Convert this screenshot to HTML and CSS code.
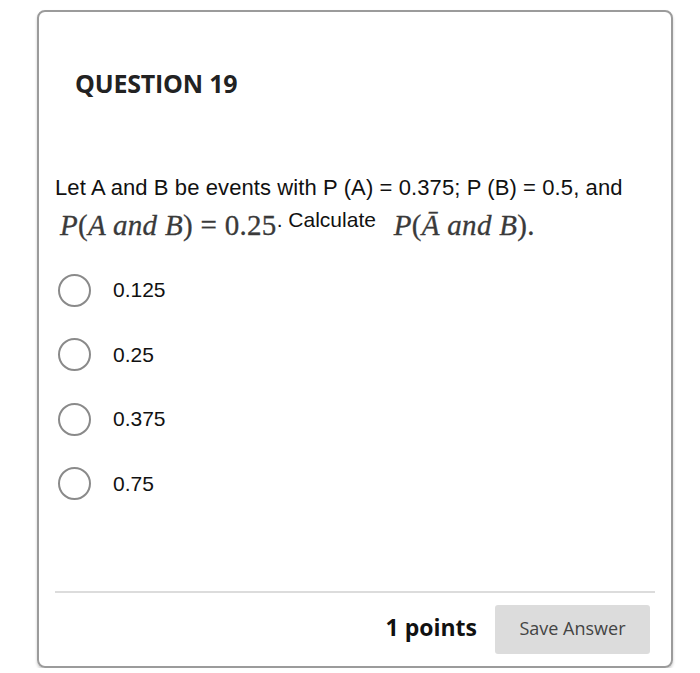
FILE: index.html
```html
<!DOCTYPE html>
<html>
<head>
<meta charset="utf-8">
<link rel="stylesheet" href="styles.css">
</head>
<body>
<div class="card">
  <h2 class="title">QUESTION 19</h2>
  <div class="question">
    <div class="line">Let A and B be events with P (A) = 0.375; P (B) = 0.5, and</div>
    <div class="line"><span class="math"><i>P</i>(<i>A and B</i>) = 0.25</span><span class="raised">. Calculate </span><span class="math math-second"><i>P</i>(<i>Ā and B</i>).</span></div>
  </div>
  <ul class="options">
    <li class="option"><span class="radio"></span><span class="label">0.125</span></li>
    <li class="option"><span class="radio"></span><span class="label">0.25</span></li>
    <li class="option"><span class="radio"></span><span class="label">0.375</span></li>
    <li class="option"><span class="radio"></span><span class="label">0.75</span></li>
  </ul>
  <div class="footer">
    <span class="points">1 points</span>
    <button class="save">Save Answer</button>
  </div>
</div>
</body>
</html>
```
FILE: styles.css
```css
html, body {
  margin: 0;
  padding: 0;
  background: #ffffff;
}
.card {
  box-sizing: border-box;
  margin: 10px 0 0 37px;
  width: 636px;
  height: 658px;
  border: 2px solid #9b9b9b;
  border-radius: 8px;
  box-shadow: 0 2px 3px rgba(0,0,0,0.2);
  padding: 0 16px 12px 16px;
  display: flex;
  flex-direction: column;
}
.title {
  margin: 56px 0 0 20px;
  font-family: "Open Sans", sans-serif;
  font-weight: 700;
  font-size: 25px;
  letter-spacing: -0.2px;
  line-height: 30px;
  color: #222;
}
.question {
  margin-top: 70px;
  font-family: "Liberation Sans", Arial, sans-serif;
  font-size: 22px;
  letter-spacing: 0.1px;
  color: #111;
}
.line {
  height: 40px;
  line-height: 40px;
  white-space: nowrap;
}
.math {
  font-family: "Liberation Serif", "Times New Roman", serif;
  font-size: 29px;
  letter-spacing: 0.3px;
  line-height: 1;
  color: #3a3a3a;
  padding-left: 5px;
  -webkit-text-stroke: 0.3px #3a3a3a;
}
.math-second {
  padding-left: 12px;
}
.math i {
  font-style: italic;
}
.raised {
  font-size: 21px;
  letter-spacing: 0;
  vertical-align: 8px;
  line-height: 1;
}
.options {
  list-style: none;
  margin: 10px 0 0 0;
  padding: 0;
}
.option {
  height: 64.5px;
  display: flex;
  align-items: center;
}
.radio {
  box-sizing: border-box;
  width: 33px;
  height: 33px;
  margin-left: 3px;
  border: 2.5px solid #8a8a8a;
  border-radius: 50%;
}
.label {
  margin-left: 22px;
  font-family: "Liberation Sans", Arial, sans-serif;
  font-size: 21px;
  color: #111;
}
.footer {
  margin-top: auto;
  border-top: 2px solid #dcdcdc;
  padding-top: 12px;
  display: flex;
  justify-content: flex-end;
  align-items: center;
  padding-right: 5px;
}
.points {
  font-family: "Open Sans", sans-serif;
  font-weight: 700;
  font-size: 23px;
  color: #111;
  margin-right: 18px;
  padding-bottom: 5px;
}
.save {
  width: 155px;
  height: 49px;
  border: none;
  border-radius: 3px;
  background: #dcdcdc;
  font-family: "Open Sans", sans-serif;
  font-size: 18px;
  color: #444;
  padding: 0 0 3px 0;
}
```
